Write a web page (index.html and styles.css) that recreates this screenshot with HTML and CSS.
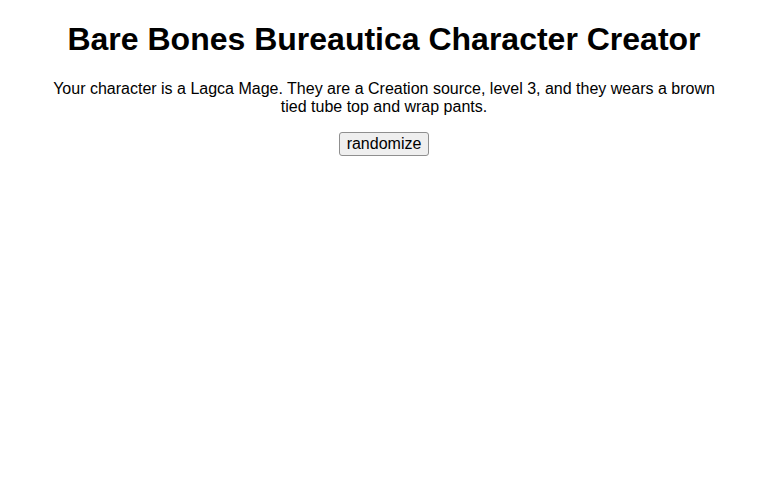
FILE: index.html
```html
<!DOCTYPE html>
<html>
<head>
<meta charset="utf-8">
<link rel="stylesheet" href="styles.css">
</head>
<body>
<div class="app">
  <h1 class="title">Bare Bones Bureautica Character Creator</h1>
  <p class="desc">Your character is a Lagca Mage. They are a Creation source, level 3, and they wears a brown tied tube top and wrap pants.</p>
  <button class="btn">randomize</button>
</div>
</body>
</html>
```

FILE: styles.css
```css
body {
  margin: 8px;
  font-family: "Liberation Sans", Arial, sans-serif;
  color: #000;
  background: #fff;
}
.app {
  text-align: center;
  padding: 0 44px;
}
.title {
  font-size: 32px;
  font-weight: bold;
  margin: 13px 0 22px;
}
.desc {
  font-size: 16px;
  margin: 16px 0;
}
.btn {
  font-family: "Liberation Sans", Arial, sans-serif;
  font-size: 16px;
  line-height: 18px;
  padding: 2px 7px;
  background: #efefef;
  border: 1px solid #8f8f8f;
  border-radius: 3px;
  color: #000;
}
```
